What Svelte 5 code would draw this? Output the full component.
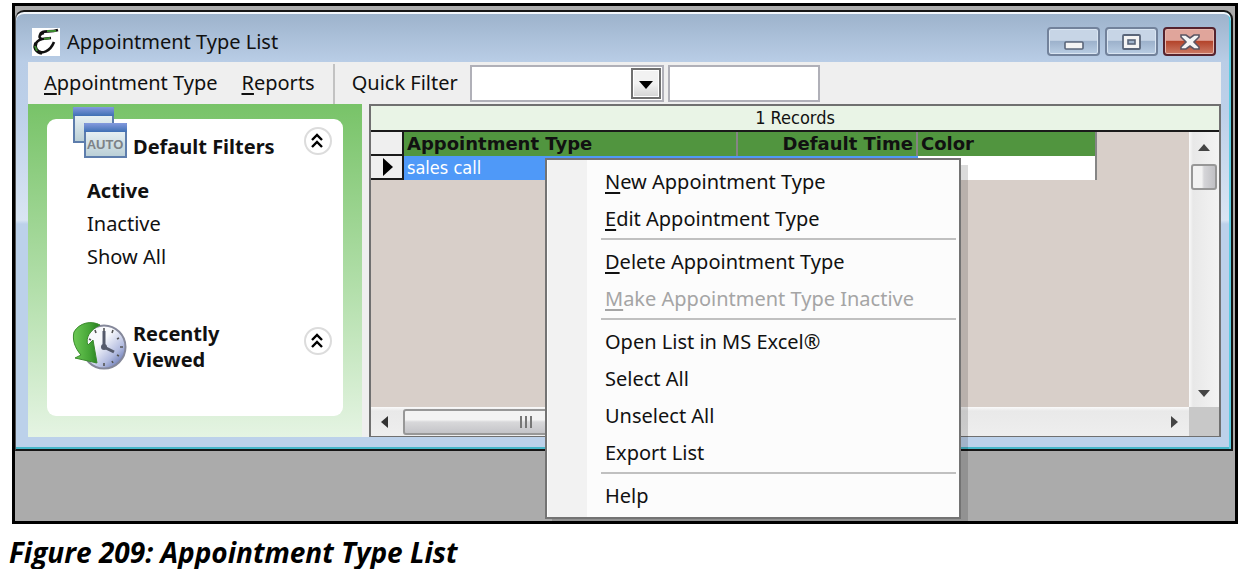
<script lang="ts">
  type MenuEntry = { key?: string; label?: string; disabled?: boolean; separator?: boolean };

  const menu: MenuEntry[] = [
    { key: "N", label: "ew Appointment Type" },
    { key: "E", label: "dit Appointment Type" },
    { separator: true },
    { key: "D", label: "elete Appointment Type" },
    { key: "M", label: "ake Appointment Type Inactive", disabled: true },
    { separator: true },
    { label: "Open List in MS Excel®" },
    { label: "Select All" },
    { label: "Unselect All" },
    { label: "Export List" },
    { separator: true },
    { label: "Help" },
  ];

  const filters = ["Active", "Inactive", "Show All"];
  let activeFilter = $state("Active");
  let quickFilter = $state("");
  let quickText = $state("");
</script>

{#snippet collapse(label: string)}
  <button class="collapse" aria-label={label}>
    <svg width="30" height="30" viewBox="0 0 30 30">
      <circle cx="15" cy="15" r="13" fill="#fff" stroke="#dcdcdc" stroke-width="2" />
      <path d="M9 14l5-5 5 5M9 21l5-5 5 5" fill="none" stroke="#000" stroke-width="2.4" />
    </svg>
  </button>
{/snippet}

<figure>
  <div class="desktop">
    <section class="window">
      <header class="titlebar">
        <svg class="logo" width="28" height="28" viewBox="0 0 28 28">
          <rect width="28" height="28" fill="#fff" />
          <path d="M8 7C9 1 17 5 26 2" fill="none" stroke="#111" stroke-width="2.6" />
          <path d="M15 3h9" stroke="#3d8a30" stroke-width="2" />
          <path d="M12 5C7 6 6 10 10 11l9-1" fill="none" stroke="#111" stroke-width="2.6" />
          <path d="M10 11C3 13 1 20 5 23c5 3 13 1 17-9" fill="none" stroke="#111" stroke-width="2.6" />
          <path d="M4 15c-2 4 0 9 6 10" fill="none" stroke="#111" stroke-width="3.4" />
          <path d="M12 11l6-1M3 18l2 5" stroke="#3d8a30" stroke-width="2" />
        </svg>
        <h1>Appointment Type List</h1>
        <div class="controls">
          <button aria-label="Minimize">
            <svg width="49" height="25" viewBox="0 0 49 25">
              <rect x="16" y="13" width="18" height="7" rx="1" fill="#f4f4f4" stroke="#596579" stroke-width="1.6" />
            </svg>
          </button>
          <button aria-label="Maximize">
            <svg width="49" height="25" viewBox="0 0 49 25">
              <rect x="16" y="6" width="17" height="14" rx="1" fill="#f4f4f4" stroke="#596579" stroke-width="1.8" />
              <rect x="21" y="11" width="7" height="4" fill="#9fb3cb" stroke="#596579" stroke-width="1.6" />
            </svg>
          </button>
          <button class="close" aria-label="Close">
            <svg width="49" height="25" viewBox="0 0 49 25">
              <path d="M16 6h5l4 3 4-3h5v2l-5 5 5 5v2h-5l-4-3-4 3h-5v-2l5-5-5-5z" fill="#f4f4f4" stroke="#5b5563" stroke-width="1.6" />
            </svg>
          </button>
        </div>
      </header>

      <div class="client">
        <nav class="menubar">
          <button><u>A</u>ppointment Type</button>
          <button><u>R</u>eports</button>
          <div class="quick">
            <label for="quick-filter">Quick Filter</label>
            <div class="combo">
              <select id="quick-filter" bind:value={quickFilter}>
                <option value=""></option>
                <option value="type">Appointment Type</option>
              </select>
              <span class="arrow">
                <svg width="14" height="8" viewBox="0 0 14 8"><path d="M0 0h14L7 8z" /></svg>
              </span>
            </div>
            <input type="text" aria-label="Filter text" bind:value={quickText} />
          </div>
        </nav>

        <div class="content">
          <aside>
            <div class="card">
              <div class="group">
                <svg class="auto" width="54" height="52" viewBox="0 0 54 52">
                  <defs>
                    <linearGradient id="pane" x2="0" y2="1">
                      <stop offset="0" stop-color="#f4fafc" />
                      <stop offset="1" stop-color="#b9ced5" />
                    </linearGradient>
                    <linearGradient id="bar" x2="0" y2="1">
                      <stop offset="0" stop-color="#849ade" />
                      <stop offset="1" stop-color="#3f70b4" />
                    </linearGradient>
                  </defs>
                  <rect x="1" y="1" width="39" height="34" fill="url(#pane)" stroke="#5d7dac" stroke-width="2" />
                  <rect width="41" height="9" rx="1" fill="url(#bar)" />
                  <rect x="12" y="17" width="41" height="33" fill="url(#pane)" stroke="#5d7dac" stroke-width="2" />
                  <rect x="11" y="16" width="43" height="9" rx="1" fill="url(#bar)" />
                  <text x="32" y="42" text-anchor="middle">AUTO</text>
                </svg>
                <h2>Default Filters</h2>
                {@render collapse("Collapse Default Filters")}
              </div>
              <ul>
                {#each filters as filter}
                  <li>
                    <button class:active={filter === activeFilter} onclick={() => (activeFilter = filter)}>
                      {filter}
                    </button>
                  </li>
                {/each}
              </ul>
              <div class="group recent">
                <svg width="56" height="50" viewBox="0 0 56 50">
                  <defs>
                    <linearGradient id="face" x2="1" y2="1">
                      <stop offset="0.4" stop-color="#f8f9fc" />
                      <stop offset="0.7" stop-color="#b3bce0" />
                      <stop offset="1" stop-color="#3f539c" />
                    </linearGradient>
                    <linearGradient id="leaf" x2="1" y2="0">
                      <stop offset="0" stop-color="#6cc955" />
                      <stop offset="0.6" stop-color="#46a537" />
                      <stop offset="1" stop-color="#217a1c" />
                    </linearGradient>
                  </defs>
                  <circle cx="33" cy="26" r="21.5" fill="url(#face)" stroke="#85889a" stroke-width="2" />
                  <path d="M33 7v3M33 42v3M49 26h3M24 9l1 3M42 9l-1 3M48 17l-2 1M48 35l-2-1M42 42l-1-2M18 18l2 1M24 42l1-2" stroke="#555" stroke-width="1.6" />
                  <path d="M33 10v16l10 5" fill="none" stroke="#555a6b" stroke-width="3" />
                  <circle cx="33" cy="26" r="3" fill="#555a6b" />
                  <path d="M29 4C20-1 8 2 3 11c-2 8 1 16 7 23l-6 3 22 5-4-23-5 5C14 17 19 9 29 4z" fill="url(#leaf)" stroke="#3b8a2e" />
                </svg>
                <h2>Recently<br />Viewed</h2>
                {@render collapse("Collapse Recently Viewed")}
              </div>
            </div>
          </aside>

          <div class="grid">
            <div class="records">1 Records</div>
            <div class="rows">
              <table>
                <thead>
                  <tr>
                    <td class="marker"></td>
                    <th class="type">Appointment Type</th>
                    <th class="time">Default Time</th>
                    <th class="color">Color</th>
                  </tr>
                </thead>
                <tbody>
                  <tr>
                    <td class="marker">
                      <svg width="10" height="18" viewBox="0 0 10 18"><path d="M0 0l10 9-10 9z" /></svg>
                    </td>
                    <td class="selected">sales call</td>
                    <td class="selected"></td>
                    <td></td>
                  </tr>
                </tbody>
              </table>
            </div>
            <div class="vscroll">
              <svg width="12" height="7" viewBox="0 0 12 7"><path d="M6 0l6 7H0z" fill="#444" /></svg>
              <div class="vthumb"></div>
              <svg class="down" width="12" height="7" viewBox="0 0 12 7"><path d="M0 0h12L6 7z" fill="#444" /></svg>
            </div>
            <div class="hscroll">
              <svg width="7" height="12" viewBox="0 0 7 12"><path d="M7 0v12L0 6z" fill="#333" /></svg>
              <div class="hthumb"><i></i><i></i><i></i></div>
              <svg class="end" width="7" height="12" viewBox="0 0 7 12"><path d="M0 0v12l7-6z" fill="#444" /></svg>
            </div>
            <div class="corner"></div>
          </div>
        </div>
      </div>
    </section>

    <div class="context" role="menu">
      {#each menu as item}
        {#if item.separator}
          <hr />
        {:else}
          <button role="menuitem" disabled={item.disabled}>
            {#if item.key}<u>{item.key}</u>{/if}{item.label}
          </button>
        {/if}
      {/each}
    </div>
  </div>
  <figcaption>Figure 209: Appointment Type List</figcaption>
</figure>

<style>
  :global(body) {
    background: #fff;
  }

  figure {
    margin: 0;
    padding: 3px 12px 0;
    font: 20px/26px "Noto Sans", "Open Sans", sans-serif;
    color: #111;
  }

  figure * {
    box-sizing: border-box;
  }

  button {
    font: inherit;
    color: inherit;
    background: none;
    border: 0;
    padding: 0;
    text-align: left;
  }

  u {
    text-decoration-thickness: 2px;
    text-underline-offset: 3px;
  }

  h1,
  h2,
  ul {
    margin: 0;
    padding: 0;
    font-size: inherit;
  }

  svg {
    display: block;
    flex: none;
  }

  .desktop {
    position: relative;
    overflow: hidden;
    background: #ababab;
    border: 3px solid #000;
    padding: 4px 2px 70px 0;
  }

  .window {
    border: 2px solid #161616;
    border-left: 1px solid #555;
    border-radius: 9px 9px 0 0;
    padding: 0 10px 12px 12px;
    background:
      linear-gradient(#9cb2cb, #b9cde6 50px, #bdd0e9 100px, #d9e5f3 208px, #bcd1ea 212px);
    box-shadow: inset 0 2px #f2f6fb, inset -2px 0 #5bcbe0, inset 0 -2px #45b6c8;
  }

  .titlebar {
    display: flex;
    align-items: center;
    height: 50px;
    padding: 9px 5px 0 4px;
  }

  h1 {
    flex: 1;
    margin-left: 7px;
    font-weight: 400;
  }

  .controls {
    display: flex;
    gap: 5px;
  }

  .controls button {
    width: 53px;
    height: 29px;
    border: 2px solid #72829b;
    border-radius: 4px;
    background: linear-gradient(#c7d5e6 0 45%, #9db2cc 50%, #b9cde3);
    box-shadow: inset 0 0 0 1px #d9e5f2;
  }

  .controls .close {
    border-color: #56232e;
    background: linear-gradient(#e0a59b 0 45%, #b4452c 50%, #cc7b66);
    box-shadow: inset 0 0 0 1px #e7b8ae;
  }

  .client {
    background: #efefef;
  }

  .menubar {
    display: flex;
    align-items: center;
    height: 42px;
    padding-left: 16px;
    gap: 24px;
  }

  .quick {
    display: flex;
    align-items: center;
    align-self: flex-end;
    height: 40px;
    margin-left: -6px;
    padding: 0 0 2px 17px;
    border-left: 2px solid #c2c2c2;
  }

  .combo {
    position: relative;
    width: 194px;
    margin: 0 4px 0 12px;
  }

  .combo select,
  .quick input {
    display: block;
    appearance: none;
    width: 100%;
    height: 37px;
    padding: 0 6px;
    font: inherit;
    background: #fff;
    border: 2px solid #b0b0b8;
    border-radius: 0;
  }

  .quick input {
    width: 152px;
  }

  .arrow {
    position: absolute;
    top: 3px;
    right: 3px;
    display: grid;
    place-items: center;
    width: 30px;
    height: 31px;
    padding-top: 4px;
    border: 2px solid #707070;
    box-shadow: inset 0 0 0 1px #fff;
    background: linear-gradient(#f2f2f2 50%, #d4d4d4);
    pointer-events: none;
  }

  .content {
    display: flex;
    gap: 7px;
  }

  aside {
    width: 334px;
    padding: 15px 19px 21px;
    background: linear-gradient(#78c368, #b3dfab 56%, #e5f4e3);
  }

  .card {
    height: 297px;
    border-radius: 9px;
    background: #fff;
  }

  .group {
    display: flex;
    align-items: center;
    padding: 0 10px 0 26px;
  }

  .group svg.auto {
    margin-top: -13px;
  }

  .auto text {
    font: bold 13px "Liberation Sans", sans-serif;
    fill: #7d8287;
  }

  h2 {
    flex: 1;
    font-weight: 700;
    margin-left: 6px;
    padding-top: 15px;
  }

  .collapse {
    margin-top: 3px;
  }

  .card ul {
    list-style: none;
    padding: 14px 0 0 40px;
  }

  li {
    height: 33px;
    line-height: 33px;
  }

  .active {
    font-weight: 700;
  }

  .recent {
    align-items: flex-start;
    padding-left: 24px;
    margin-top: 48px;
  }

  .recent h2 {
    padding-top: 0;
  }

  .recent .collapse {
    margin-top: 5px;
  }

  .grid {
    flex: 1;
    display: grid;
    grid-template: 26px 1fr 29px / 1fr 30px;
    border: 2px solid #707070;
    border-width: 2px 2px 1px;
    font: 18px/24px "DejaVu Sans Condensed", "DejaVu Sans", sans-serif;
  }

  .records {
    grid-column: 1 / 3;
    text-align: center;
    background: #e9f4e6;
    border-bottom: 2px solid #1a1a1a;
  }

  .rows {
    background: #d8cfc9;
  }

  table {
    table-layout: fixed;
    width: 726px;
    border-collapse: separate;
    border-spacing: 0;
  }

  td,
  th {
    height: 24px;
    padding: 0 3px;
    text-align: left;
    white-space: nowrap;
    background: #fff;
    border-right: 2px solid #858585;
  }

  th {
    font-family: "DejaVu Sans", sans-serif;
    background: #51953f;
  }

  .marker {
    width: 33px;
    padding: 0 0 0 12px;
    background: #efefef;
    border-right: 2px solid #1a1a1a;
    border-bottom: 2px solid #1a1a1a;
  }

  .type {
    width: 334px;
  }

  .time {
    width: 180px;
    text-align: right;
  }

  .selected {
    color: #fff;
    background: #4f99f8;
    border-color: #4f99f8;
  }

  .vscroll {
    display: flex;
    flex-direction: column;
    align-items: center;
    padding: 12px 0 10px;
    background: linear-gradient(90deg, #fafafa, #e8e8e8 4px, #f3f3f3);
  }

  .vthumb {
    width: 26px;
    height: 26px;
    margin-top: 13px;
    border: 2px solid #979797;
    border-radius: 3px;
    background: linear-gradient(90deg, #f2f2f2 40%, #d5d5d8 50%, #c0c0c4);
  }

  .down {
    margin-top: auto;
  }

  .hscroll {
    display: flex;
    align-items: center;
    padding: 0 11px 0 10px;
    background: linear-gradient(#fafafa, #e9e9e9 4px, #eeeeee);
  }

  .hthumb {
    display: flex;
    align-items: center;
    justify-content: center;
    gap: 3px;
    width: 246px;
    height: 26px;
    margin-left: 15px;
    border: 2px solid #979797;
    border-radius: 3px;
    background: linear-gradient(#f3f3f3 40%, #d8d8da 50%, #c4c4c8);
  }

  .hthumb i {
    width: 2px;
    height: 12px;
    background: #777;
  }

  .end {
    margin-left: auto;
  }

  .corner {
    background: #c8c8c8;
  }

  .context {
    position: absolute;
    top: 152px;
    left: 530px;
    width: 416px;
    padding: 4px 3px 2px 0;
    border: 2px solid #737373;
    background: linear-gradient(90deg, #fcfcfc 1px, #f2f2f2 1px 40px, #fcfcfc 40px);
    box-shadow: 7px 7px rgba(0, 0, 0, 0.14);
  }

  .context button {
    display: block;
    width: 100%;
    height: 37px;
    padding: 0 0 2px 58px;
  }

  .context button:disabled {
    color: #a5a5a5;
  }

  .context hr {
    height: 2px;
    margin: 0 0 4px 54px;
    border: 0;
    background: #c0c0c0;
  }

  figcaption {
    margin: 11px 0 0 -3px;
    font: italic 700 28px/34px "Open Sans", sans-serif;
    color: #000;
  }
</style>
